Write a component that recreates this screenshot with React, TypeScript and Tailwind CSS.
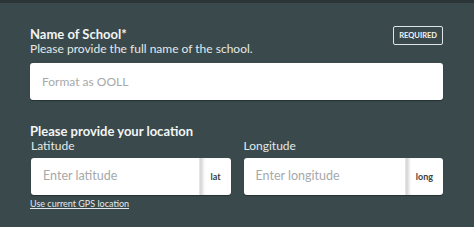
import { useState } from "react";

// Single coordinate field with a suffix tag ("lat" / "long")
function CoordInput({
  label,
  placeholder,
  suffix,
}: {
  label: string;
  placeholder: string;
  suffix: string;
}) {
  const [value, setValue] = useState("");
  return (
    <div className="flex flex-col">
      <label className="text-[12px] leading-[14px] text-[#e3e9ea]">{label}</label>
      <div className="mt-[5px] flex h-[37px] overflow-hidden rounded-[3px] bg-white shadow-[0_1px_1px_rgba(0,0,0,0.35)]">
        <input
          value={value}
          onChange={(e) => setValue(e.target.value)}
          placeholder={placeholder}
          className="min-w-0 flex-1 bg-transparent px-[12px] text-[12.5px] text-[#333] outline-none placeholder:text-[#a6a9aa]"
        />
        <span className="flex items-center border-l border-[#e4e4e4] px-[10px] text-[9px] font-bold text-[#3a3f41] shadow-[inset_4px_0_3px_-1px_rgba(0,0,0,0.16)]">
          {suffix}
        </span>
      </div>
    </div>
  );
}

export default function App() {
  const [school, setSchool] = useState("");

  return (
    <div className="min-h-[227px] w-[474px] bg-[#3a494c] font-['Lato','Open_Sans',sans-serif]">
      <div className="h-[3px] bg-[#2b3538]" />

      <div className="pl-[30px] pr-[31px] pt-[23px]">
        {/* School name */}
        <div className="flex items-start justify-between">
          <div>
            <h2 className="text-[13px] font-bold leading-[16px] text-[#f2f5f5]">Name of School*</h2>
            <p className="text-[12px] leading-[14px] text-[#e3e9ea]">
              Please provide the full name of the school.
            </p>
          </div>
          <span className="rounded-[2px] border-[1.5px] border-[#dfe5e6] px-[5px] py-[4px] text-[7.5px] font-bold leading-[9px] text-[#f2f5f5]">
            REQUIRED
          </span>
        </div>

        <input
          value={school}
          onChange={(e) => setSchool(e.target.value)}
          placeholder="Format as OOLL"
          className="mt-[7px] block h-[37px] w-full rounded-[3px] bg-white px-[12px] text-[12px] text-[#333] outline-none shadow-[0_1px_1px_rgba(0,0,0,0.35)] placeholder:text-[#a6a9aa]"
        />

        {/* Location */}
        <h2 className="mt-[24px] text-[13px] font-bold leading-[15px] text-[#f2f5f5]">
          Please provide your location
        </h2>
        <div className="grid grid-cols-2 gap-[13px] pl-[1px]">
          <CoordInput label="Latitude" placeholder="Enter latitude" suffix="lat" />
          <CoordInput label="Longitude" placeholder="Enter longitude" suffix="long" />
        </div>
        <a href="#" className="mt-[3px] block w-fit text-[9px] leading-[11px] text-[#e3e9ea] underline">
          Use current GPS location
        </a>
      </div>
    </div>
  );
}
